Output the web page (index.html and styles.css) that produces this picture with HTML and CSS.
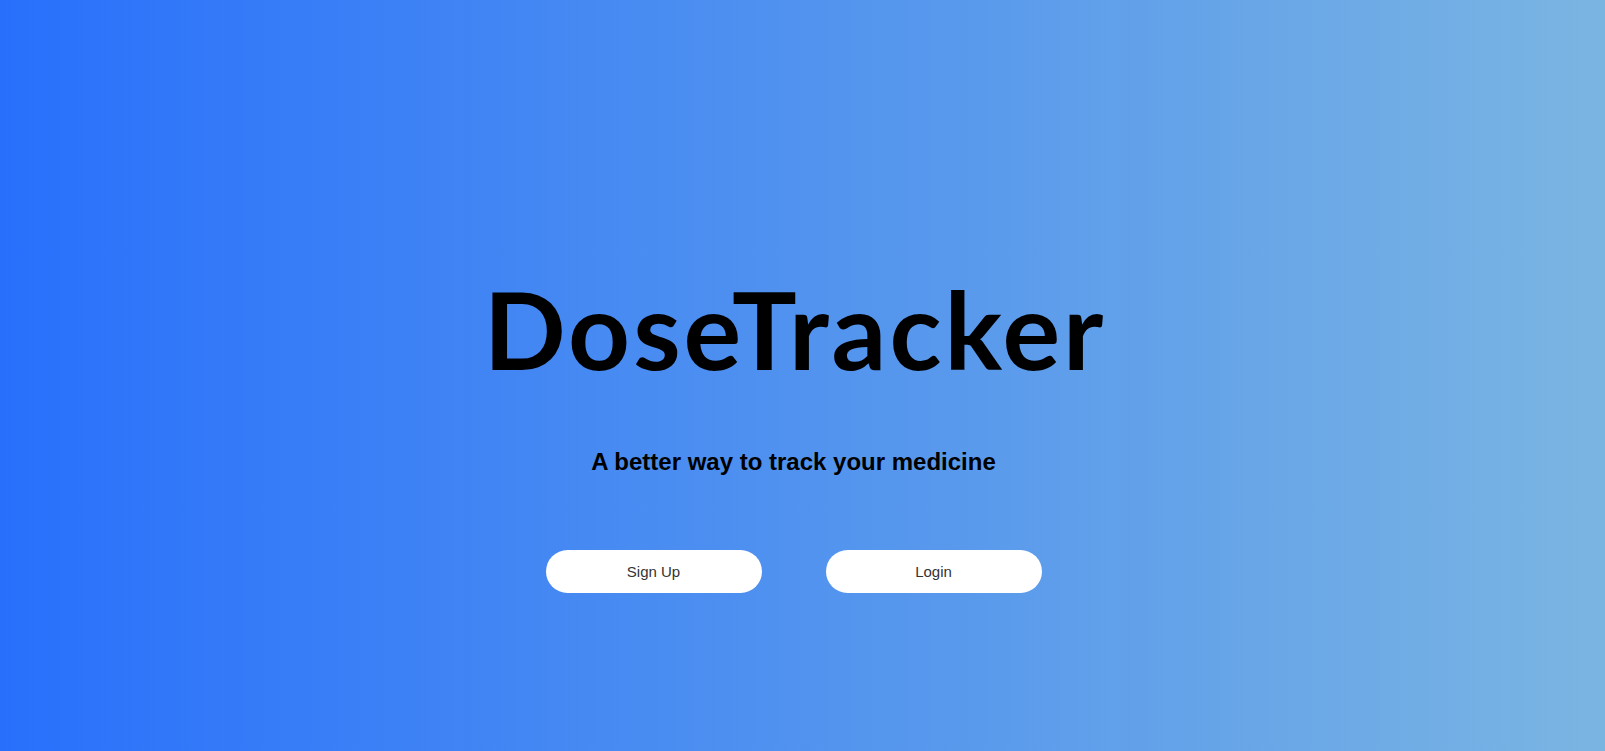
FILE: index.html
```html
<!DOCTYPE html>
<html lang="en">
<head>
    <meta charset="UTF-8">
    <meta name="viewport" content="width=device-width, initial-scale=1.0">
    <title>DoseTracker</title>
    <link rel="stylesheet" href="styles.css">
</head>
<body>
    <div class="landing">
        <h1 class="brand">DoseTracker</h1>
        <p class="tagline">A better way to track your medicine</p>
        <div class="actions">
            <button class="btn">Sign Up</button>
            <button class="btn">Login</button>
        </div>
    </div>
</body>
</html>
```

FILE: styles.css
```css
html, body {
    margin: 0;
    padding: 0;
    height: 100%;
}
body {
    font-family: "Liberation Sans", Arial, sans-serif;
    background: linear-gradient(to right, #2870fc, #7ab5e2);
    color: #000;
}
.landing {
    display: flex;
    flex-direction: column;
    align-items: center;
    padding-top: 274px;
    padding-right: 18px;
}
.brand {
    font-family: Lato, sans-serif;
    font-weight: 700;
    font-size: 108px;
    line-height: 1;
    letter-spacing: 3px;
    margin: 0 0 0 3px;
}
.tagline {
    font-size: 24px;
    font-weight: bold;
    margin: 66px 0 0;
}
.actions {
    display: flex;
    gap: 64px;
    margin-top: 74px;
}
.btn {
    width: 216px;
    height: 43px;
    border: none;
    border-radius: 22px;
    background-color: #fff;
    color: #333;
    font-family: "Liberation Sans", Arial, sans-serif;
    font-size: 15px;
    cursor: pointer;
}
```
